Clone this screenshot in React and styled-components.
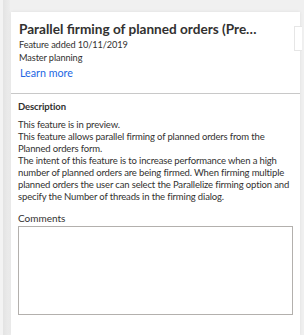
import React from "react";
import styled, { createGlobalStyle } from "styled-components";

const GlobalStyle = createGlobalStyle`
  html, body {
    margin: 0;
    padding: 0;
    background: #f0f0f0;
    overflow: hidden;
  }
  body {
    font-family: "Segoe UI", Lato, "Liberation Sans", sans-serif;
    color: #323130;
  }
`;

const Page = styled.div`
  display: flex;
  height: 335px;
  padding-top: 12px;
  box-sizing: border-box;
`;

const Rail = styled.div`
  width: 11px;
  flex: none;
  margin-top: -12px;
  background: linear-gradient(
    to right,
    #f3f3f3 0,
    #f3f3f3 3px,
    #e3e3e3 3px,
    #ededed 10px,
    #f3f3f3 11px
  );
`;

const Panel = styled.section`
  position: relative;
  width: 289px;
  background: #ffffff;
  box-shadow: 0 0 3px rgba(0, 0, 0, 0.08);
`;

const Header = styled.header`
  display: flex;
  flex-direction: column;
  align-items: flex-start;
  padding: 8px 8px 12px 8px;
  border-bottom: 1px solid #c8c8c8;
`;

const Title = styled.h1`
  margin: 0;
  max-width: 244px;
  font-size: 13.6px;
  font-weight: 700;
  line-height: 18px;
  color: #323130;
  white-space: nowrap;
  overflow: hidden;
  text-overflow: ellipsis;
`;

const Meta = styled.div`
  font-size: 9.2px;
  letter-spacing: -0.1px;
  line-height: 13px;
  color: #323130;
`;

const Link = styled.a`
  margin-top: 1px;
  margin-left: 1px;
  font-size: 10.7px;
  line-height: 16px;
  color: #2266e3;
  text-decoration: none;
`;

const Tab = styled.div`
  position: absolute;
  top: 14px;
  right: -2px;
  width: 7px;
  height: 23px;
  background: #ffffff;
  border: 1px solid #e6e6e6;
  border-right: none;
`;

const Body = styled.div`
  display: flex;
  flex-direction: column;
  padding: 6px 7px 0 7px;
`;

const Label = styled.div`
  font-size: 9.5px;
  font-weight: 700;
  letter-spacing: -0.1px;
  line-height: 14px;
  color: #323130;
`;

const Text = styled.p`
  margin: 5px 0 0 0;
  font-size: 9.5px;
  letter-spacing: -0.15px;
  line-height: 12px;
  white-space: nowrap;
  color: #323130;
`;

const FieldLabel = styled.label`
  margin-top: 8px;
  font-size: 10px;
  line-height: 14px;
  color: #323130;
`;

const Comments = styled.textarea`
  display: block;
  margin-top: 1px;
  width: 275px;
  height: 89px;
  box-sizing: border-box;
  border: 1px solid #b3b0ad;
  resize: none;
  outline: none;
  font: inherit;
`;

const lines = [
  "This feature is in preview.",
  "This feature allows parallel firming of planned orders from the",
  "Planned orders form.",
  "The intent of this feature is to increase performance when a high",
  "number of planned orders are being firmed. When firming multiple",
  "planned orders the user can select the Parallelize firming option and",
  "specify the Number of threads in the firming dialog.",
];

export default function App() {
  return (
    <>
      <GlobalStyle />
      <Page>
        <Rail />
        <Panel>
          <Tab />
          <Header>
            <Title>Parallel firming of planned orders (Preview)</Title>
            <Meta>Feature added 10/11/2019</Meta>
            <Meta>Master planning</Meta>
            <Link href="#">Learn more</Link>
          </Header>
          <Body>
            <Label>Description</Label>
            <Text>
              {lines.map((line, i) => (
                <React.Fragment key={i}>
                  {line}
                  {i < lines.length - 1 && <br />}
                </React.Fragment>
              ))}
            </Text>
            <FieldLabel>Comments</FieldLabel>
            <Comments />
          </Body>
        </Panel>
      </Page>
    </>
  );
}
